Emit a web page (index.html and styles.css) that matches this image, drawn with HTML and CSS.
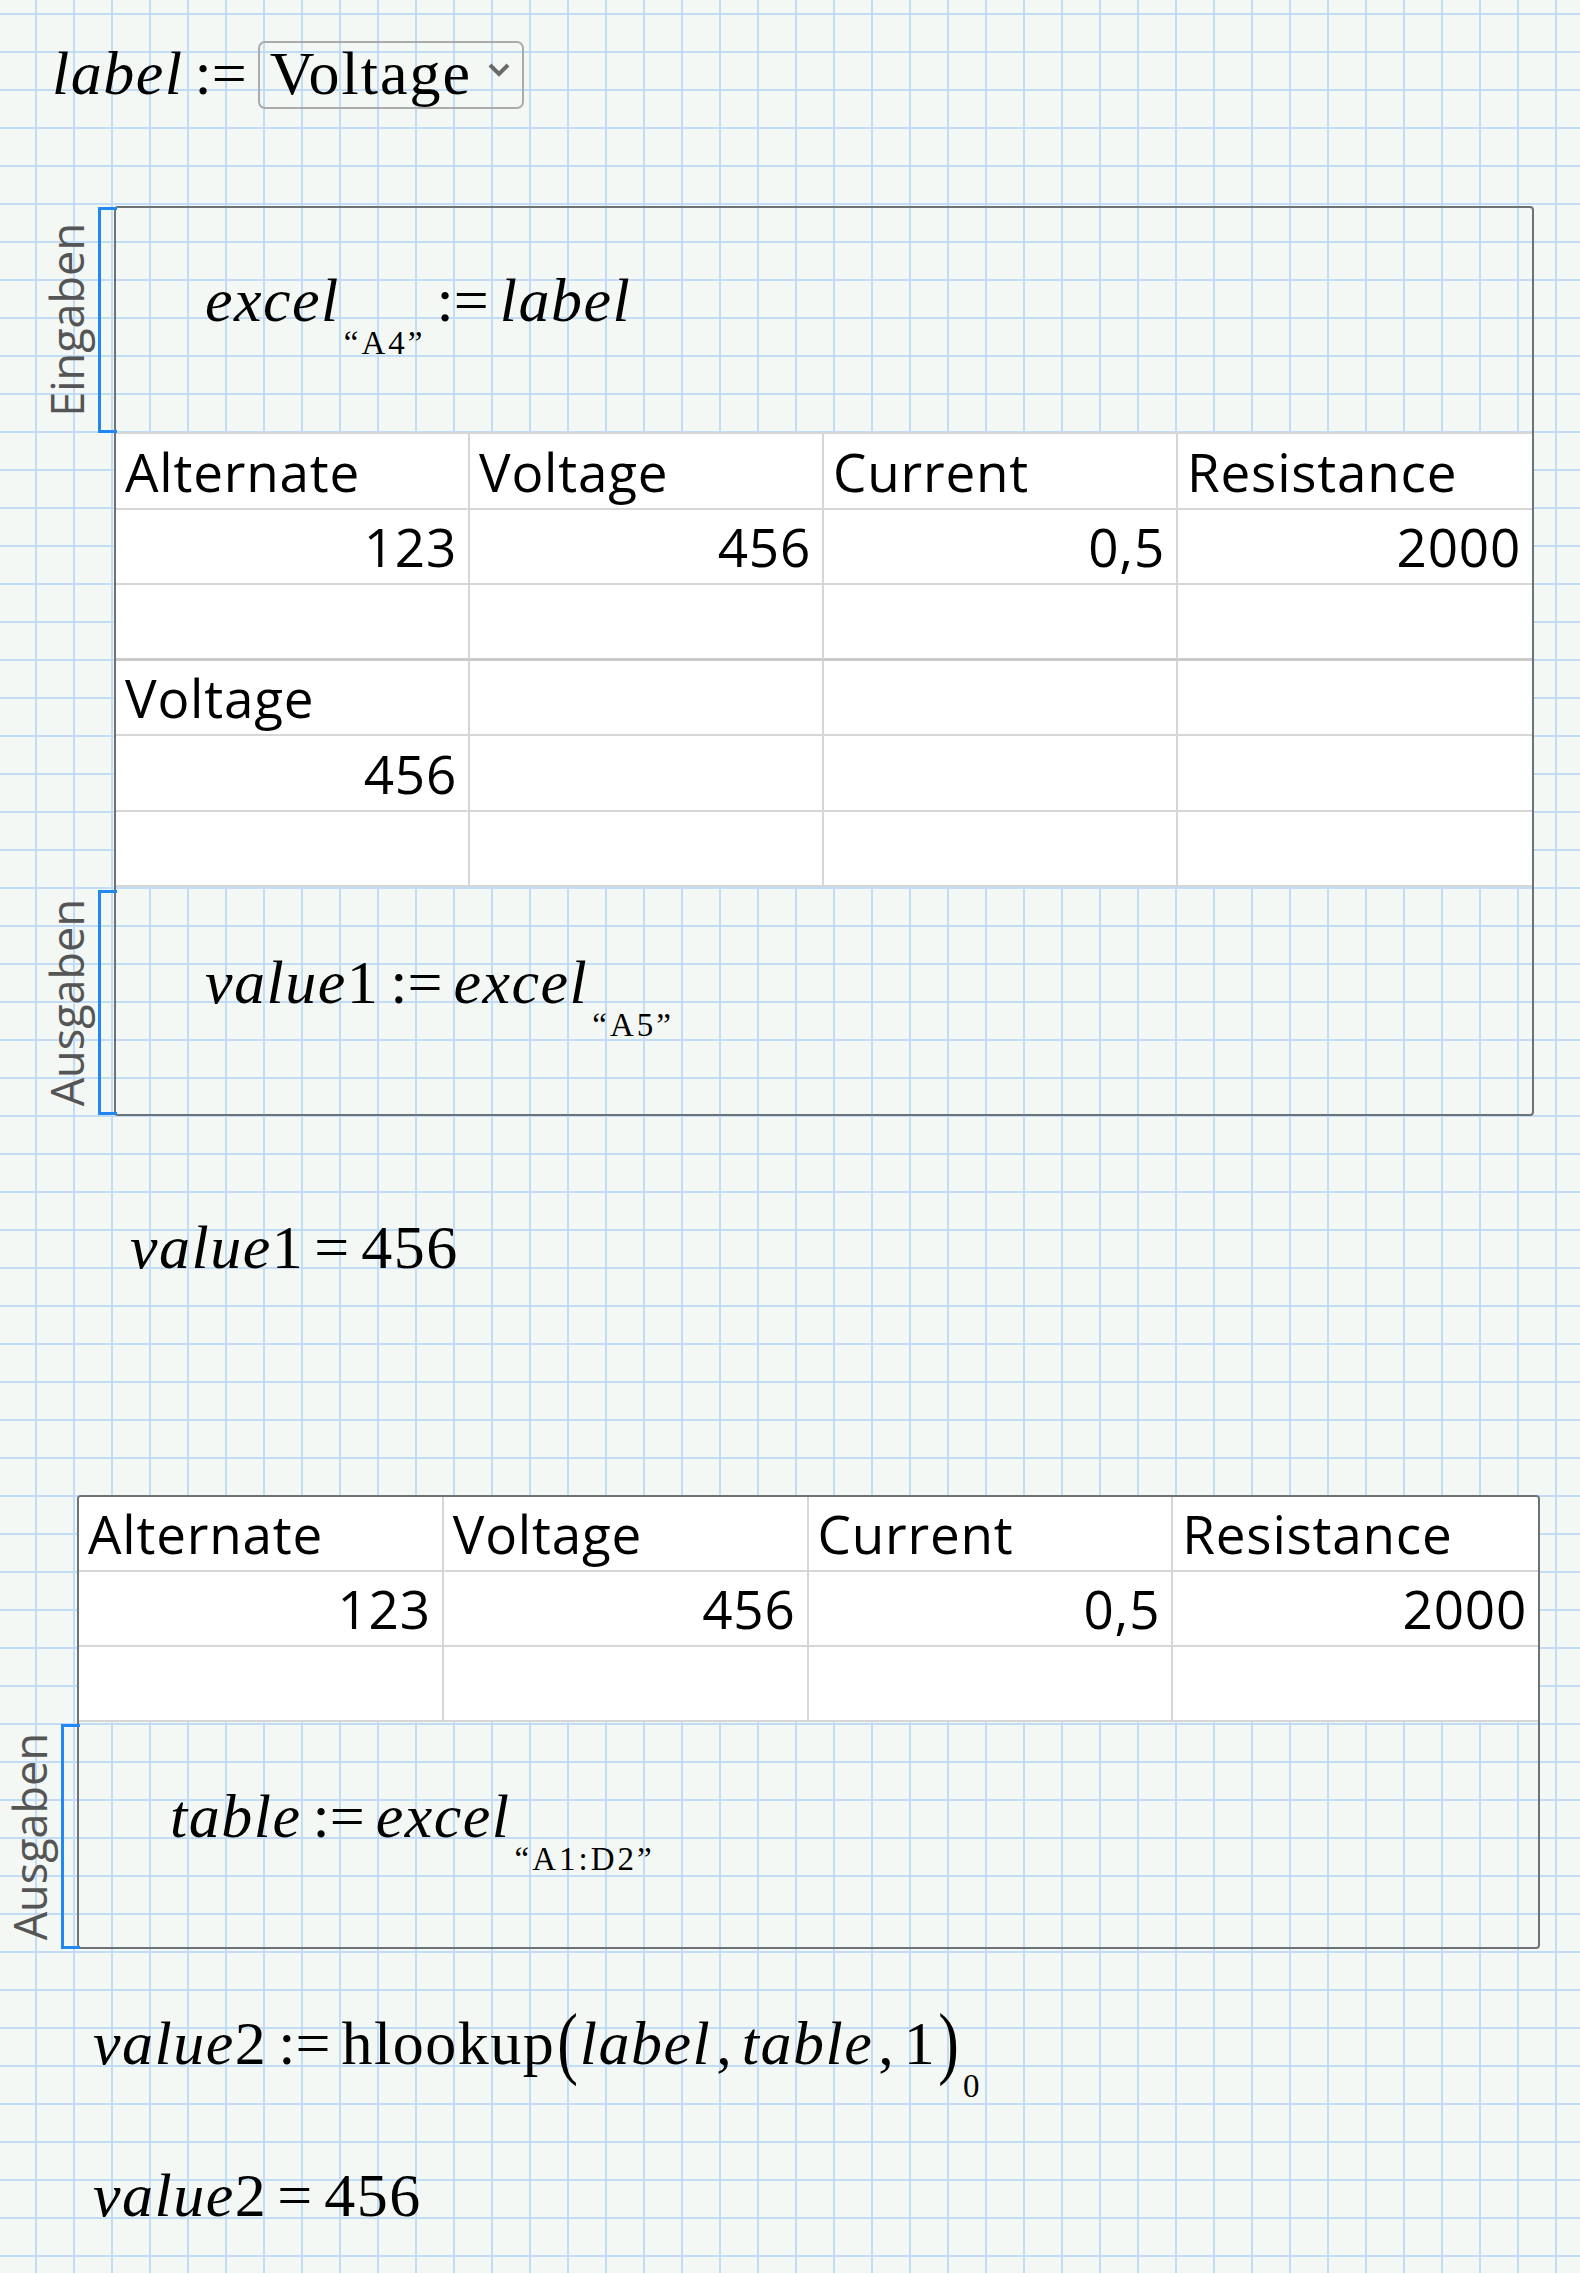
FILE: index.html
```html
<!DOCTYPE html>
<html lang="de">

<head>
    <meta charset="UTF-8">
    <meta name="viewport" content="width=device-width, initial-scale=1.0">
    <link rel="stylesheet" href="styles.css">
    <title>Excel-Komponente</title>
</head>

<body>
    <div class="sheet">
        <!-- Auswahl -->
        <div class="line line-label"><span class="v">label</span><span class="op">:=</span><span class="pick"><span class="pick-text">Voltage</span><svg class="chevron" width="22" height="14" viewBox="0 0 22 14"><polyline points="2,2 11,11 20,2" fill="none" stroke="#6a6a6a" stroke-width="4"/></svg></span></div>

        <!-- Excel-Komponente mit Ein- und Ausgabe -->
        <div class="block block-one">
            <div class="side">
                <div class="gap-top"></div>
                <div class="side-part side-in">
                    <span class="tag">Eingaben</span>
                    <span class="bracket"></span>
                </div>
                <div class="gap-mid"></div>
                <div class="side-part side-out">
                    <span class="tag">Ausgaben</span>
                    <span class="bracket"></span>
                </div>
            </div>
            <div class="frame frame-one">
                <div class="pane pane-in">
                    <div class="line"><span class="v">excel</span><span class="sub">“A4”</span><span class="op">:=</span><span class="v">label</span></div>
                </div>
                <div class="xl xl-one">
                    <div class="c">Alternate</div>
                    <div class="c">Voltage</div>
                    <div class="c">Current</div>
                    <div class="c">Resistance</div>
                    <div class="c num">123</div>
                    <div class="c num">456</div>
                    <div class="c num">0,5</div>
                    <div class="c num">2000</div>
                    <div class="c cut"></div>
                    <div class="c cut"></div>
                    <div class="c cut"></div>
                    <div class="c cut"></div>
                    <div class="c">Voltage</div>
                    <div class="c"></div>
                    <div class="c"></div>
                    <div class="c"></div>
                    <div class="c num">456</div>
                    <div class="c"></div>
                    <div class="c"></div>
                    <div class="c"></div>
                    <div class="c"></div>
                    <div class="c"></div>
                    <div class="c"></div>
                    <div class="c"></div>
                </div>
                <div class="pane pane-out">
                    <div class="line"><span class="v">value<span class="n">1</span></span><span class="op">:=</span><span class="v">excel</span><span class="sub">“A5”</span></div>
                </div>
            </div>
        </div>

        <div class="line line-result"><span class="v">value<span class="n">1</span></span><span class="eq">=</span><span class="t">456</span></div>

        <!-- Tabelle auslesen -->
        <div class="block block-two">
            <div class="side">
                <div class="gap-two"></div>
                <div class="side-part side-out">
                    <span class="tag">Ausgaben</span>
                    <span class="bracket"></span>
                </div>
            </div>
            <div class="frame frame-two">
                <div class="xl xl-two">
                    <div class="c">Alternate</div>
                    <div class="c">Voltage</div>
                    <div class="c">Current</div>
                    <div class="c">Resistance</div>
                    <div class="c num">123</div>
                    <div class="c num">456</div>
                    <div class="c num">0,5</div>
                    <div class="c num">2000</div>
                    <div class="c"></div>
                    <div class="c"></div>
                    <div class="c"></div>
                    <div class="c"></div>
                </div>
                <div class="pane pane-two">
                    <div class="line"><span class="v">table</span><span class="op">:=</span><span class="v">excel</span><span class="sub">“A1:D2”</span></div>
                </div>
            </div>
        </div>

        <div class="line line-look"><span class="v">value<span class="n">2</span></span><span class="op">:=</span><span class="t">hlookup</span><span class="paren">(</span><span class="v">label</span><span class="comma">,</span><span class="v">table</span><span class="comma">,</span><span class="t">1</span><span class="paren">)</span><span class="sub sub-index">0</span></div>

        <div class="line line-last"><span class="v">value<span class="n">2</span></span><span class="eq">=</span><span class="t">456</span></div>
    </div>
</body>

</html>
```

FILE: styles.css
```css
* {
    box-sizing: border-box;
}

html,
body {
    margin: 0;
}

body {
    min-height: 2273px;
    color: #000;
    background-color: #f4f8f4;
    background-image:
        linear-gradient(90deg, #c3dcf6 2px, transparent 2px),
        linear-gradient(180deg, #c3dcf6 2px, transparent 2px);
    background-size: 38px 38px;
    background-position: 35px 13px;
}

.sheet {
    padding-top: 41px;
}

/* Formelzeilen */
.line {
    height: 60px;
    font-family: "Liberation Serif", serif;
    font-size: 62px;
    line-height: 60px;
    white-space: nowrap;
}

.v {
    font-style: italic;
    letter-spacing: 1.5px;
}

.n {
    font-style: normal;
}

.t {
    letter-spacing: 1.5px;
}

.op {
    margin: 0 11px;
}

.eq {
    margin: 0 12px 0 10px;
}

.comma {
    margin: 0 10px 0 5px;
}

.sub {
    font-size: 33px;
    line-height: 0;
    vertical-align: -33px;
    letter-spacing: 3px;
    margin: 0 0 0 4px;
}

.sub-index {
    margin-left: 2px;
}

.paren {
    display: inline-block;
    transform: scaleY(1.3);
    transform-origin: 50% 35px;
    margin: 0 2px;
}

.line-label {
    height: auto;
    margin-left: 52px;
}

.line-result {
    margin: 101px 0 0 130px;
}

.line-look {
    margin: 64px 0 0 93px;
}

.line-last {
    margin: 92px 0 0 93px;
}

/* Auswahlfeld */
.pick {
    display: inline-flex;
    align-items: flex-start;
    padding: 0 12px 4px 10px;
    border: 2px solid #ababab;
    border-radius: 7px;
    letter-spacing: 2px;
}

.chevron {
    margin: 20px 0 0 16px;
}

/* Bereiche */
.block {
    display: flex;
    align-items: flex-start;
}

.block-one {
    margin: 97px 0 0 44px;
}

.block-two {
    margin: 218px 0 0 7px;
}

.side {
    position: relative;
    z-index: 1;
    display: flex;
    flex-direction: column;
    width: 73px;
    margin-right: -3px;
}

.side-part {
    display: flex;
    align-items: center;
}

.gap-top {
    height: 1px;
}

.side-in {
    height: 226px;
}

.gap-mid {
    height: 457px;
}

.side-out {
    height: 225px;
}

.gap-two {
    height: 229px;
}

.tag {
    width: 45px;
    margin-right: 9px;
    writing-mode: vertical-rl;
    transform: rotate(180deg);
    font-family: "Open Sans", sans-serif;
    font-size: 45px;
    line-height: 45px;
    color: #555;
    white-space: nowrap;
}

.bracket {
    align-self: stretch;
    width: 19px;
    border: 3px solid #2188f2;
    border-right: 0;
}

.frame {
    border: 2px solid #6d7276;
    border-radius: 4px;
    overflow: hidden;
}

.frame-one {
    width: 1420px;
}

.frame-two {
    width: 1463px;
}

.pane-in {
    height: 224px;
    padding: 62px 0 0 89px;
}

.pane-out {
    height: 227px;
    padding: 65px 0 0 89px;
}

.pane-two {
    height: 225px;
    padding: 64px 0 0 91px;
}

/* Tabellen */
.xl {
    display: grid;
    grid-template-columns: repeat(4, 1fr);
    grid-auto-rows: 75.5px;
    background: #fff;
    font-family: "Open Sans", sans-serif;
    font-size: 53px;
    line-height: 52px;
    letter-spacing: 0.8px;
}

.xl-one {
    border-top: 2px solid #d6d6d6;
}

.xl-two {
    grid-auto-rows: 75px;
}

.c {
    display: flex;
    align-items: flex-end;
    padding: 0 11px 10px 9px;
    border-right: 2px solid #d6d6d6;
    border-bottom: 2px solid #d6d6d6;
}

.c:nth-child(4n) {
    border-right: 0;
}

.num {
    justify-content: flex-end;
}

.cut {
    border-bottom: 3px solid #cbcbcb;
}
```
